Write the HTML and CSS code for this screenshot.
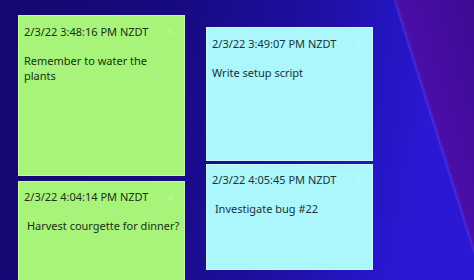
FILE: index.html
```html
<!DOCTYPE html>
<html lang="en">
<head>
    <meta charset="UTF-8">
    <meta name="viewport" content="width=device-width, initial-scale=1.0">
    <title>Notes</title>
    <link rel="stylesheet" href="styles.css">
</head>
<body>
    <div class="desktop">
        <!-- green notes -->
        <div class="note note-green note-1">
            <span class="note-close">×</span>
            <div class="note-date">2/3/22 3:48:16 PM NZDT</div>
            <div class="note-text">Remember to water the plants</div>
        </div>
        <div class="note note-green note-2">
            <span class="note-close">×</span>
            <div class="note-date">2/3/22 4:04:14 PM NZDT</div>
            <div class="note-text"> Harvest courgette for dinner?</div>
        </div>

        <!-- cyan notes -->
        <div class="note note-cyan note-3">
            <span class="note-close">×</span>
            <div class="note-date">2/3/22 3:49:07 PM NZDT</div>
            <div class="note-text">Write setup script</div>
        </div>
        <div class="note note-cyan note-4">
            <span class="note-close">×</span>
            <div class="note-date">2/3/22 4:05:45 PM NZDT</div>
            <div class="note-text"> Investigate bug #22</div>
        </div>
    </div>
</body>
</html>
```

FILE: styles.css
```css
body {
    margin: 0;
    font-family: "Noto Sans", "Open Sans", sans-serif;
    overflow: hidden;
}

.desktop {
    position: relative;
    width: 474px;
    height: 280px;
    overflow: hidden;
    background:
        linear-gradient(72.5deg, transparent 85.6%, rgba(120,80,255,0.35) 85.8%, #4a0ea8 86.4%, #3c0a92 100%),
        linear-gradient(100deg, #13086f 0%, #170a82 35%, #1e10a4 62%, #2716c8 80%, #2a18d4 86%);
}

.note {
    position: absolute;
    box-sizing: border-box;
    width: 167px;
    padding: 8px 1px 8px 5px;
    font-size: 11px;
    line-height: 15px;
    border: 1px solid rgba(255,255,255,0.35);
}

.note-green {
    background: #a8f47a;
    color: #1a3015;
}

.note-cyan {
    background: #abf7fb;
    color: #183236;
}

.note-1 { left: 18px; top: 15px; height: 161px; }
.note-2 { left: 18px; top: 181px; height: 120px; padding-top: 7px; }
.note-3 { left: 206px; top: 27px; height: 134px; }
.note-4 { left: 206px; top: 164px; height: 106px; padding-top: 7px; }

.note-date {
    white-space: nowrap;
}

.note-text {
    margin-top: 14px;
    padding-right: 20px;
    white-space: pre-wrap;
}

.note-2 .note-text {
    padding-right: 0;
}

.note-close {
    position: absolute;
    right: 10px;
    top: 8px;
    font-size: 12px;
    color: rgba(255,255,255,0.25);
}
```
